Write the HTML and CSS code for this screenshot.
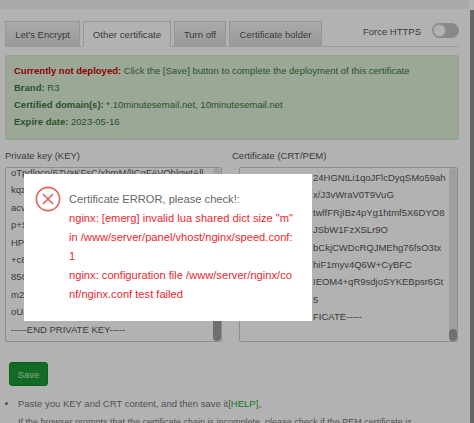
FILE: index.html
```html
<!DOCTYPE html>
<html lang="en">
<head>
<meta charset="utf-8">
<title>SSL</title>
<link rel="stylesheet" href="styles.css">
</head>
<body>
<div class="page">
  <div class="topstrip"></div>
  <div class="tabbar">
    <div class="tab t1">Let's Encrypt</div>
    <div class="tab t2 active">Other certificate</div>
    <div class="tab t3">Turn off</div>
    <div class="tab t4">Certificate holder</div>
    <div class="force">
      <span>Force HTTPS</span>
      <span class="switch"><span class="knob"></span></span>
    </div>
  </div>
  <div class="alert">
    <p><b class="red">Currently not deployed:</b> Click the [Save] button to complete the deployment of this certificate</p>
    <p><b>Brand:</b> R3</p>
    <p><b>Certified domain(s):</b> *.10minutesemail.net, 10minutesemail.net</p>
    <p><b>Expire date:</b> 2023-05-16</p>
  </div>
  <div class="fields">
    <div class="field key">
      <div class="label">Private key (KEY)</div>
      <div class="box">
        <div class="line">oTpdlqcn/67VaKFsC/xbmM/lICgFAVQhlqwtAll</div>
        <div class="line">kqz</div>
        <div class="line">acv</div>
        <div class="line">p+S</div>
        <div class="line">HP-</div>
        <div class="line">+c8</div>
        <div class="line">85C</div>
        <div class="line">m2:</div>
        <div class="line">oUa</div>
        <div class="line">-----END PRIVATE KEY-----</div>
        <div class="track"></div>
        <div class="bar barkey"></div>
      </div>
    </div>
    <div class="field crt">
      <div class="label">Certificate (CRT/PEM)</div>
      <div class="box">
        <div class="line">24HGNtLi1qoJFlcDyqSMo59ah</div>
        <div class="line">x/J3vWraV0T9VuG</div>
        <div class="line">twlfFRjIBz4pYg1htmf5X6DYO8</div>
        <div class="line">JSbW1FzXSLr9O</div>
        <div class="line">bCkjCWDcRQJMEhg76fsO3tx</div>
        <div class="line">hiF1myv4Q6W+CyBFC</div>
        <div class="line">IEOM4+qR9sdjoSYKEBpsr6Gt</div>
        <div class="line">5</div>
        <div class="line">FICATE-----</div>
        <div class="track"></div>
        <div class="bar barcrt"></div>
      </div>
    </div>
  </div>
  <button class="save">Save</button>
  <ul class="help">
    <li>Paste you KEY and CRT content, and then save it<a>[HELP]</a>。</li>
    <li class="warn">If the browser prompts that the certificate chain is incomplete, please check if the PEM certificate is</li>
  </ul>
</div>
<div class="mask"></div>
<div class="edge"></div>
<div class="modal">
  <svg class="icon" viewBox="0 0 26 26" aria-hidden="true">
    <circle cx="13" cy="13" r="11.6"/>
    <path d="M8 8 18 18M18 8 8 18"/>
  </svg>
  <div class="msg">
    <div class="title">Certificate ERROR, please check!:</div>
    <div class="err">nginx: [emerg] invalid lua shared dict size "m"<br>in /www/server/panel/vhost/nginx/speed.conf:<br>1<br>nginx: configuration file /www/server/nginx/co<br>nf/nginx.conf test failed</div>
  </div>
</div>
</body>
</html>
```
FILE: styles.css
```css
* { box-sizing: border-box; }
html, body { margin: 0; height: 100%; overflow: hidden; }
body { background: #fff; font-family: "Liberation Sans", Arial, sans-serif; font-size: 9.5px; color: #555; position: relative; }
.page { height: 423px; width: 469px; overflow: hidden; }
.topstrip { height: 9px; background: #f2f2f2; }
.tabbar { display: flex; align-items: flex-start; margin: 12px 10px 0 5px; height: 26px; border-bottom: 1px solid #ddd; gap: 3px; }
.tab { height: 25px; line-height: 25px; text-align: center; background: linear-gradient(#f3f3f3, #dcdcdc); border: 1px solid #d8d8d8; border-bottom: none; color: #555; white-space: nowrap; }
.t1 { width: 75px; }
.t2 { width: 88px; font-size: 9.7px; }
.t3 { width: 52px; }
.t4 { width: 93px; }
.tab.active { background: #fff; height: 26px; border-bottom: 1px solid #fff; }
.force { margin-left: auto; display: flex; align-items: center; gap: 11px; height: 20px; white-space: nowrap; }
.switch { display: block; width: 27px; height: 15px; margin-top: -1px; border-radius: 8px; background: #c5c5c5; padding: 1px; }
.knob { display: block; width: 13px; height: 13px; border-radius: 50%; background: #fff; border: 1px solid #d8d8d8; }
.alert { margin: 8px 10px 0 5px; height: 85px; padding: 6px 8px; background: #dff0d8; border: 1px solid #d6e9c6; border-radius: 2px; color: #3c763d; line-height: 17px; }
.alert p { margin: 0; }
.red { color: #c00; }
.fields { display: flex; margin: 7px 0 0 5px; }
.field { display: flex; flex-direction: column; }
.key { width: 217px; }
.crt { width: 226px; margin-left: 10px; }
.label { height: 20px; line-height: 16px; padding-top: 1px; color: #555; }
.crt .box { margin-left: 7px; padding: 1px 0 0 73px; }
.box { position: relative; height: 175px; border: 1px solid #ccc; border-radius: 2px; padding: 0 0 0 5px; overflow: hidden; background: #fff; color: #555; }
.key .line:first-child { margin-top: -4px; }
.line { height: 17.4px; line-height: 17.4px; white-space: nowrap; overflow: hidden; }
.track { position: absolute; right: 0; top: 0; bottom: 0; width: 8px; border-radius: 4px; background: #e4e4e4; }
.bar { position: absolute; right: 0; width: 8px; border-radius: 4px; background: #a0a0a0; }
.barkey { top: 120px; bottom: 0; }
.barcrt { bottom: 0; height: 12px; }
.save { display: block; margin: 20px 0 0 9px; width: 39px; height: 24px; background: #1a9a34; border: 1px solid #168a2c; border-radius: 3px; color: #c4ecce; font: 9.5px "Liberation Sans", Arial, sans-serif; padding: 0; }
.help { margin: 9px 0 0; padding: 0 0 0 18px; line-height: 18px; color: #777; width: 474px; }
.help a { color: #20a53a; }
.help li { white-space: nowrap; }
.warn { list-style: none; font-size: 9px; }
.mask { position: absolute; inset: 0; background: rgba(0, 0, 0, .3); }
.edge { position: absolute; right: 0; top: 10px; bottom: 0; width: 4px; background: #666; }
.modal { position: absolute; left: 24px; top: 174px; width: 288px; height: 147px; background: #fff; display: flex; }
.icon { width: 26px; height: 26px; margin: 12px 0 0 11px; flex: none; fill: none; stroke: #e0605a; stroke-width: 1.6; }
.msg { margin-left: 8px; padding-top: 16px; line-height: 19px; font-size: 11.15px; white-space: nowrap; }
.title { color: #666; }
.err { color: #ee1f2e; }
```
